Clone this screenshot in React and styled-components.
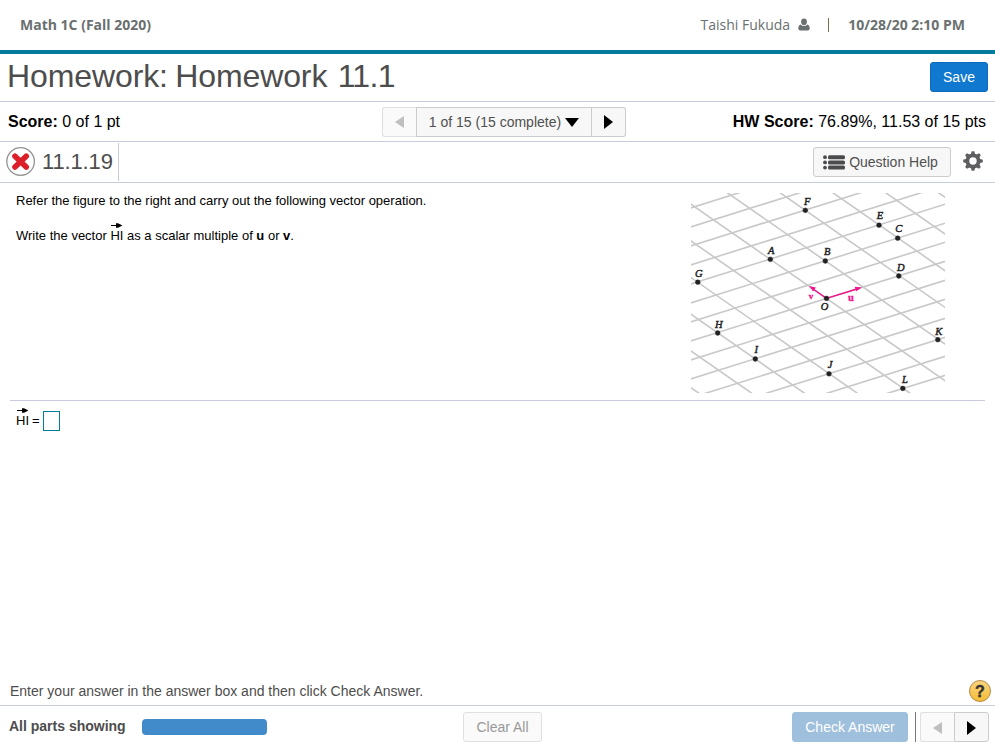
import React from "react"
import styled, { createGlobalStyle } from "styled-components"

const GlobalStyle = createGlobalStyle`
  * {
    box-sizing: border-box;
  }
  body {
    margin: 0;
    background: #fff;
    color: #000;
    font-family: "Liberation Sans", Arial, sans-serif;
    overflow: hidden;
  }
`
const Page = styled.div`
  display: flex;
  flex-direction: column;
  height: 100vh;
`
const CourseBar = styled.header`
  display: flex;
  align-items: center;
  height: 54px;
  padding: 0 30px 1px 20px;
  border-bottom: 4px solid #047a9c;
  color: #6a7070;
  font-family: "Open Sans", sans-serif;
  font-size: 14px;
`
const Course = styled.strong`
  margin-right: auto;
`
const User = styled.span`
  display: flex;
  align-items: center;
  gap: 8px;
`
const Separator = styled.span`
  width: 1px;
  height: 14px;
  margin: 0 19px 0 18px;
  background: #7d6b4f;
`
const Row = styled.div`
  display: flex;
  align-items: center;
  justify-content: space-between;
  height: ${(props) => props.$height}px;
  border-bottom: 1px solid #c8cbdc;
`
const TitleRow = styled(Row)`
  padding: 0 7px 2px 7px;
`
const Title = styled.h1`
  margin: 0;
  padding-bottom: 1px;
  color: #4d4d4d;
  font-size: 32px;
  font-weight: 400;
  line-height: 40px;
  letter-spacing: -0.1px;
  word-spacing: -1.5px;
`
const TitleNumber = styled.span`
  margin-left: 3px;
  letter-spacing: -0.7px;
`
const Button = styled.button`
  display: flex;
  align-items: center;
  justify-content: center;
  height: 30px;
  width: ${(props) => props.$width}px;
  padding: 0;
  border: 1px solid #ccc;
  border-radius: 3px;
  background: #f7f7f7;
  color: #505050;
  font-family: inherit;
  font-size: 14px;
  white-space: nowrap;
  &:disabled {
    border-color: #e0e0e0;
    background: #fafafa;
    color: #999;
  }
`
const SaveButton = styled(Button)`
  border-color: #0d6cb9;
  background: #1078cf;
  color: #fff;
`
const CheckButton = styled(Button)`
  &:disabled {
    border-color: #9fc0dc;
    background: #9fc0dc;
    color: #fff;
  }
`
const ScoreRow = styled(Row)`
  display: grid;
  grid-template-columns: 374px auto 1fr;
  padding: 0 9px 0 8px;
  font-size: 16px;
`
const Score = styled.span`
  justify-self: ${(props) => props.$align || "start"};
`
const ButtonGroup = styled.div`
  display: flex;
  ${Button} {
    border-radius: 0;
  }
  ${Button}:first-child {
    border-radius: 3px 0 0 3px;
    border-right: 0;
  }
  ${Button}:last-child {
    border-radius: 0 3px 3px 0;
  }
  ${Button} + ${Button}:nth-child(3) {
    border-left: 0;
  }
`
const Arrow = styled.span`
  border: 6px solid transparent;
  border-width: 6.5px 9px;
  border-right-color: #bfbfbf;
  border-left-width: 0;
  margin-top: 1px;
  ${(props) =>
    props.$to === "right" &&
    `
    border-width: 7px 0 7px 9px;
    border-right-color: transparent;
    border-left-color: #000;
  `}
  ${(props) =>
    props.$to === "down" &&
    `
    margin: 2px 0 0 4px;
    border-width: 9px 7px 0;
    border-right-color: transparent;
    border-top-color: #000;
  `}
`
const QuestionName = styled.div`
  display: flex;
  align-items: center;
  gap: 6px;
  height: 38px;
  padding: 0 5px 0 6px;
  border-right: 1px solid #c8cbdc;
  color: #4d4d4d;
  font-size: 22px;
  letter-spacing: -0.15px;
`
const QuestionTools = styled.div`
  display: flex;
  align-items: center;
  gap: 12px;
  padding-right: 12px;
`
const HelpButton = styled(Button)`
  gap: 4px;
  padding-right: 3px;
`
const Problem = styled.main`
  display: flex;
  justify-content: space-between;
  height: 218px;
  margin: 0 10px;
  padding: 9px 40px 0 6px;
  border-bottom: 1px solid #c8cbdc;
  font-size: 13px;
  line-height: 18px;
`
const Paragraph = styled.p`
  margin: 0 0 17px;
`
const Figure = styled.svg`
  margin-top: 1px;
  flex: none;
`
const VectorName = styled.span`
  position: relative;
`
const VectorArrow = styled.svg`
  position: absolute;
  left: 1px;
  top: -5px;
`
const Answer = styled.div`
  display: flex;
  align-items: flex-start;
  gap: 3px;
  padding: 10px 16px 0;
  font-size: 13px;
  line-height: 20px;
  ${VectorArrow} {
    top: -3px;
  }
`
const AnswerBox = styled.input`
  width: 17px;
  height: 20px;
  margin: 0;
  padding: 0;
  border: 1px solid #047a9c;
  outline: 0;
`
const Hint = styled.div`
  display: flex;
  align-items: center;
  justify-content: space-between;
  height: 29px;
  margin-top: auto;
  padding: 0 3px 0 10px;
  color: #4d4d4d;
  font-size: 14px;
`
const Footer = styled.footer`
  display: flex;
  align-items: center;
  height: 44px;
  padding: 0 6px 1px 9px;
  border-top: 1px solid #c8cbdc;
`
const PartsLabel = styled.strong`
  width: 133px;
  padding-bottom: 3px;
  color: #4d4d4d;
  font-size: 14px;
`
const Progress = styled.div`
  width: 125px;
  height: 16px;
  margin-right: 196px;
  border-radius: 4px;
  background: #428bca;
`
const FooterActions = styled.div`
  display: flex;
  align-items: center;
  margin-left: auto;
`
const Divider = styled.span`
  width: 1px;
  height: 30px;
  margin: 0 4px 0 7px;
  background: #777;
`

// grid basis of the figure, in pixels
const origin = [135.5, 105.4]
const u = [36.4, -11.4]
const v = [-18.85, -13.1]
const range = Array.from({ length: 31 }, (_, i) => i - 15)

const points = [
  { name: "F", x: 114.3, y: 17.3, dx: 2, dy: -5 },
  { name: "E", x: 188, y: 32.2, dx: 1, dy: -6 },
  { name: "C", x: 206.7, y: 45.2, dx: 1, dy: -6 },
  { name: "A", x: 79.3, y: 66.3, dx: 1, dy: -5 },
  { name: "B", x: 134.3, y: 68, dx: 2, dy: -6 },
  { name: "D", x: 207.8, y: 83, dx: 2, dy: -5 },
  { name: "G", x: 6.8, y: 89.2, dx: 1, dy: -5 },
  { name: "O", x: 135.5, y: 105.4, dx: -2, dy: 12 },
  { name: "H", x: 26.7, y: 140, dx: 1, dy: -5 },
  { name: "I", x: 64.3, y: 166, dx: 1, dy: -6 },
  { name: "K", x: 246.8, y: 146.7, dx: 1, dy: -5 },
  { name: "J", x: 138, y: 180.8, dx: 1, dy: -6 },
  { name: "L", x: 211.8, y: 195.4, dx: 2, dy: -5 },
]

function GridLine({ step, along, n }) {
  const x = origin[0] + step[0] * n
  const y = origin[1] + step[1] * n
  return (
    <line
      x1={x - along[0] * 20}
      y1={y - along[1] * 20}
      x2={x + along[0] * 20}
      y2={y + along[1] * 20}
    />
  )
}

function VectorFigure() {
  return (
    <Figure width="254" height="200" viewBox="0 0 254 200">
      <g stroke="#c8c8ca" strokeWidth="1.6">
        {range.map((n) => (
          <GridLine key={`u${n}`} step={v} along={u} n={n} />
        ))}
        {range.map((n) => (
          <GridLine key={`v${n}`} step={u} along={v} n={n} />
        ))}
      </g>
      <g stroke="#f0148c" fill="#f0148c" strokeWidth="1.4">
        <path d="M135.5 105.4 L166 96 M135.5 105.4 L122 96" />
        <path d="M171 94.4l-7.2-.6 1.4 4.4zM118 93l6.8 1.6-2.6 4z" stroke="none" />
      </g>
      <g
        fontFamily="Liberation Serif, serif"
        fontSize="9"
        fontWeight="700"
        textAnchor="middle"
        fill="#f0148c"
        stroke="#f0148c"
        strokeWidth=".3"
      >
        <text x="120" y="105.5">v</text>
        <text x="160" y="107.5" fontSize="10.5">u</text>
      </g>
      <g
        fontFamily="Liberation Serif, serif"
        fontSize="10.5"
        fontStyle="italic"
        textAnchor="middle"
        fill="#222"
        stroke="#222"
        strokeWidth=".45"
      >
        {points.map((p) => (
          <g key={p.name}>
            <circle cx={p.x} cy={p.y} r="2.4" />
            <text x={p.x + p.dx} y={p.y + p.dy}>{p.name}</text>
          </g>
        ))}
      </g>
    </Figure>
  )
}

function Vector({ name }) {
  return (
    <VectorName>
      {name}
      <VectorArrow width="12" height="6" viewBox="0 0 12 6">
        <path d="M0 1.9h5V.2h2l4.5 2.3L7 4.8H5V3.1H0z" />
      </VectorArrow>
    </VectorName>
  )
}

function UserIcon() {
  return (
    <svg width="12" height="13" viewBox="0 0 12 13" fill="#6a7070">
      <ellipse cx="6" cy="3.8" rx="2.9" ry="3.4" />
      <path d="M2.8 6.5C.8 6.8.3 8.7.3 10.5c0 1.3.8 2 1.9 2h7.6c1.1 0 1.9-.7 1.9-2 0-1.8-.5-3.7-2.5-4-.9 1-2 1.5-3.2 1.5S3.7 7.5 2.8 6.5z" />
    </svg>
  )
}

function GearIcon() {
  return (
    <svg width="20" height="22" viewBox="0 0 20 22" fill="#5f5f61">
      <circle cx="10" cy="10" r="5.6" fill="none" stroke="#5f5f61" strokeWidth="3.8" />
      {[0, 45, 90, 135, 180, 225, 270, 315].map((angle) => (
        <path
          key={angle}
          d="M7.8 3.5L8.7.2h2.6l.9 3.3z"
          transform={`rotate(${angle} 10 10)`}
        />
      ))}
    </svg>
  )
}

function WrongIcon() {
  return (
    <svg width="30" height="30" viewBox="0 0 30 30">
      <circle cx="14.6" cy="14.5" r="13.8" fill="#fff" stroke="#929292" strokeWidth="1.3" />
      <path
        d="M9 9.2l11.2 10.8M20.2 9.2L9 20"
        stroke="#dc1f28"
        strokeWidth="5.6"
        strokeLinecap="round"
      />
    </svg>
  )
}

function ListIcon() {
  return (
    <svg width="22" height="15" viewBox="0 0 22 15" fill="#4b4b4d">
      {[0, 5.2, 10.4].map((y) => (
        <g key={y}>
          <circle cx="2" cy={y + 2.2} r="1.9" />
          <rect x="5" y={y + 0.2} width="17" height="4" rx="1.5" />
        </g>
      ))}
    </svg>
  )
}

function HelpIcon() {
  return (
    <svg width="24" height="24" viewBox="0 0 24 24">
      <defs>
        <linearGradient id="gold" x2="0" y2="1">
          <stop offset="0" stopColor="#fbd580" />
          <stop offset="1" stopColor="#f5bd35" />
        </linearGradient>
      </defs>
      <circle cx="12" cy="12" r="10.5" fill="url(#gold)" stroke="#b68a45" strokeWidth="1" />
      <text
        x="12"
        y="17.5"
        fontFamily="Liberation Sans, sans-serif"
        fontSize="16"
        fontWeight="700"
        textAnchor="middle"
        fill="#333"
        stroke="#333"
        strokeWidth=".4"
      >
        ?
      </text>
    </svg>
  )
}

export default function App() {
  return (
    <Page>
      <GlobalStyle />
      <CourseBar>
        <Course>Math 1C (Fall 2020)</Course>
        <User>
          Taishi Fukuda <UserIcon />
        </User>
        <Separator />
        <strong>10/28/20 2:10 PM</strong>
      </CourseBar>
      <TitleRow $height={48}>
        <Title>
          Homework: Homework <TitleNumber>11.1</TitleNumber>
        </Title>
        <SaveButton $width={58}>Save</SaveButton>
      </TitleRow>
      <ScoreRow $height={40}>
        <Score>
          <b>Score:</b> 0 of 1 pt
        </Score>
        <ButtonGroup>
          <Button $width={34} disabled>
            <Arrow />
          </Button>
          <Button $width={176}>
            1 of 15 (15 complete)
            <Arrow $to="down" />
          </Button>
          <Button $width={34}>
            <Arrow $to="right" />
          </Button>
        </ButtonGroup>
        <Score $align="end">
          <b>HW Score:</b> 76.89%, 11.53 of 15 pts
        </Score>
      </ScoreRow>
      <Row $height={41}>
        <QuestionName>
          <WrongIcon />
          11.1.19
        </QuestionName>
        <QuestionTools>
          <HelpButton $width={138}>
            <ListIcon />
            Question Help
          </HelpButton>
          <GearIcon />
        </QuestionTools>
      </Row>
      <Problem>
        <div>
          <Paragraph>
            Refer the figure to the right and carry out the following vector operation.
          </Paragraph>
          <Paragraph>
            Write the vector <Vector name="HI" /> as a scalar multiple of <b>u</b> or <b>v</b>.
          </Paragraph>
        </div>
        <VectorFigure />
      </Problem>
      <Answer>
        <Vector name="HI" />
        <span>=</span>
        <AnswerBox />
      </Answer>
      <Hint>
        Enter your answer in the answer box and then click Check Answer.
        <HelpIcon />
      </Hint>
      <Footer>
        <PartsLabel>All parts showing</PartsLabel>
        <Progress />
        <Button $width={79} disabled>
          Clear All
        </Button>
        <FooterActions>
          <CheckButton $width={116} disabled>
            Check Answer
          </CheckButton>
          <Divider />
          <ButtonGroup>
            <Button $width={34} disabled>
              <Arrow />
            </Button>
            <Button $width={35}>
              <Arrow $to="right" />
            </Button>
          </ButtonGroup>
        </FooterActions>
      </Footer>
    </Page>
  )
}
